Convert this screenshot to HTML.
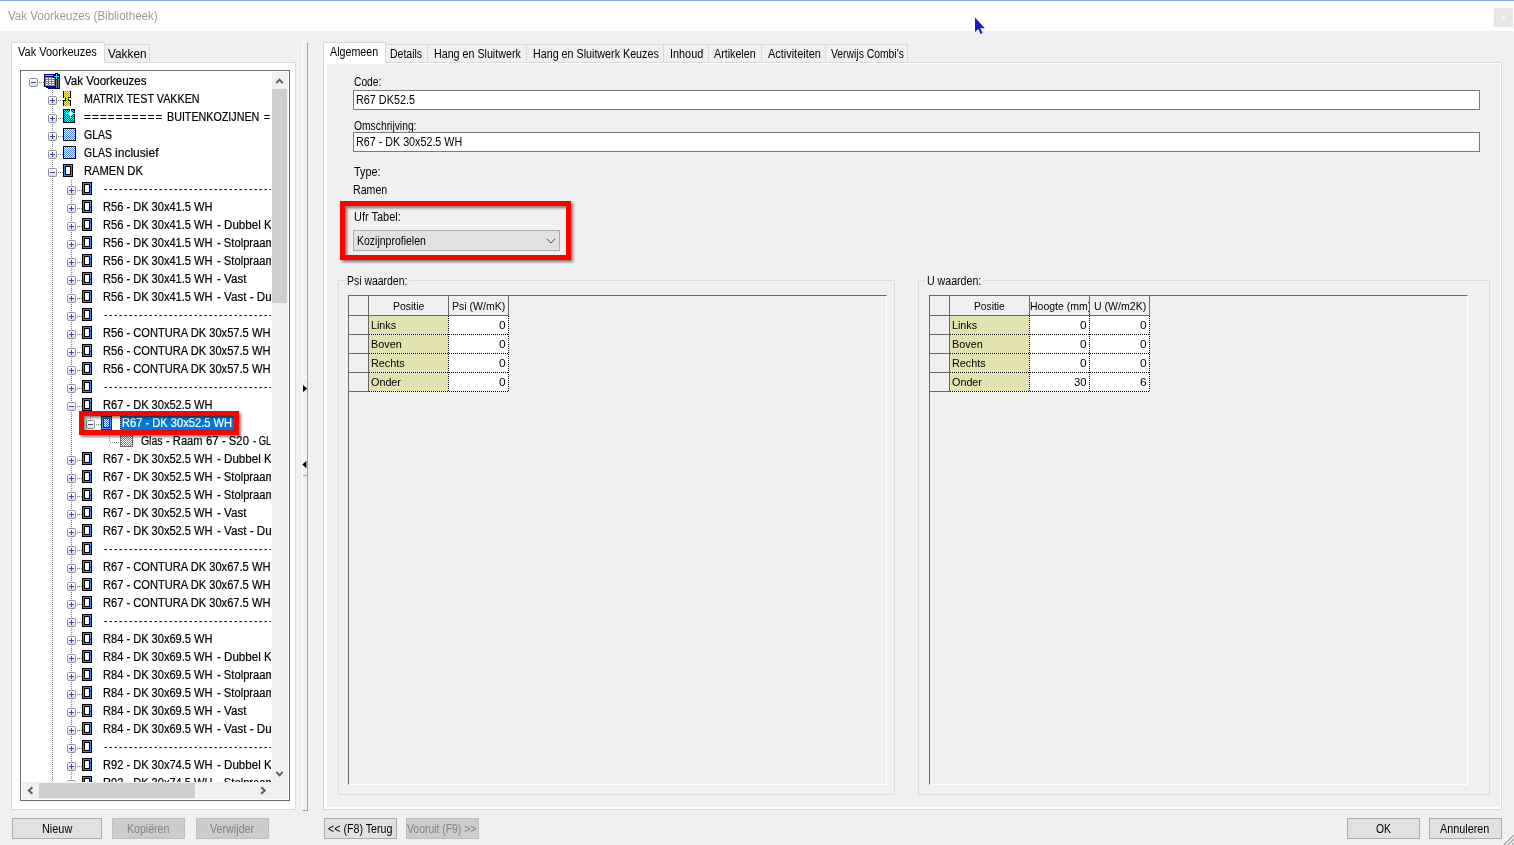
<!DOCTYPE html><html lang="nl"><head><meta charset="utf-8"><title>Vak Voorkeuzes (Bibliotheek)</title><style>
*{box-sizing:border-box;margin:0;padding:0}
html,body{width:1514px;height:845px;overflow:hidden;background:#f0f0f0}
body{position:relative;font-family:"Liberation Sans",sans-serif;font-size:11px;color:#000}
.a{position:absolute}
.t{position:absolute;white-space:pre;line-height:14px;height:14px}
.ms{font-size:11px;}
.sg{font-size:12px;transform-origin:0 50%}
.btn{position:absolute;height:21px;background:#e1e1e1;border:1px solid #adadad;text-align:center;line-height:19px;font-size:11px;white-space:pre}
.btn.dis{background:#cccccc;border-color:#bfbfbf;color:#838383}
.inp{position:absolute;background:#fff;border:1px solid #7a7a7a;height:20px}
.gb{position:absolute;border:1px solid #dcdcdc}
.gbl{position:absolute;background:#f0f0f0;white-space:pre;line-height:14px;height:14px}
.tab{position:absolute;top:44px;height:18px;border:1px solid #d9d9d9;border-bottom:none;background:#f0f0f0;line-height:14px;white-space:pre;text-align:center}
.tabsel{position:absolute;top:42px;height:21px;border:1px solid #d9d9d9;border-bottom:none;background:#fff;white-space:pre;text-align:center}
.vd{position:absolute;width:1px;background:repeating-linear-gradient(to bottom,#808080 0 1px,transparent 1px 2px)}
.hd{position:absolute;height:1px;background:repeating-linear-gradient(to right,#808080 0 1px,transparent 1px 2px)}
.ex{position:absolute;width:9px;height:9px;border:1px solid #919191;border-radius:1.5px;background:linear-gradient(#ffffff 0,#f2f2f2 50%,#d9d9d9 100%)}
.ex i{position:absolute;left:1px;top:3px;width:5px;height:1px;background:#31499f}
.ex b{position:absolute;left:3px;top:1px;width:1px;height:5px;background:#31499f}
.iw{position:absolute;width:10px;height:13px;background:#fff;box-shadow:inset 0 0 0 1px #000,inset 0 0 0 2px #3f7fff,inset 0 0 0 3px #000}
.ig{position:absolute;width:13px;height:13px;border:1px solid #000;background:repeating-conic-gradient(#4f86ff 0 25%,#ffffff 0 50%) 0 0/2px 2px}
.igd{position:absolute;width:13px;height:13px;background:repeating-conic-gradient(#4f86ff 0 25%,#ffffff 0 50%) 0 0/2px 2px;outline:1px dotted #5a5a5a;outline-offset:-1px}
.cell{position:absolute;height:18px;line-height:18px;white-space:pre;font-size:11px;overflow:hidden}
</style></head><body>
<div class="a" style="left:0;top:0;width:1514px;height:31px;background:#fff"></div>
<div class="a" style="left:0;top:0;width:1514px;height:1px;background:#82add3"></div>
<div class="t" style="left:7.80px;top:9px;font-size:12px;color:#9a9a9a;transform-origin:0 50%;transform:scaleX(0.9596);">Vak Voorkeuzes (Bibliotheek)</div>
<div class="a" style="left:1494px;top:8px;width:19px;height:19px;background:#e6e6e6"></div>
<svg class="a" style="left:1499px;top:13px" width="9" height="9" viewBox="0 0 9 9"><path d="M2.2 2.1L6.6 6.5M6.6 2.1L2.2 6.5" stroke="#f6f6f6" stroke-width="1.3" fill="none"/></svg>
<svg class="a" style="left:974px;top:16px" width="12" height="20" viewBox="0 0 12 20"><path d="M1 1.5V16L4.3 12.9L6.6 18L8.6 17.1L6.3 12.2H10.8Z" fill="#1c1cc4"/></svg>
<div class="a" style="left:11px;top:62px;width:285px;height:748px;background:#fff;border:1px solid #dcdcdc"></div>
<div class="tab" style="left:104px;width:46px"></div>
<div class="tabsel" style="left:11px;width:94px"></div>
<div class="t" style="left:18.30px;top:45px;font-size:12px;color:#000;transform-origin:0 50%;transform:scaleX(0.9184);">Vak Voorkeuzes</div>
<div class="t" style="left:107.90px;top:47px;font-size:12px;color:#000;transform-origin:0 50%;transform:scaleX(0.9847);">Vakken</div>
<div class="a" id="tree" style="left:20px;top:70px;width:270px;height:731px;background:#fff;border:1px solid #6d6d6d;overflow:hidden">
<div class="vd" style="left:31px;top:19px;height:710px"></div>
<div class="vd" style="left:50px;top:109px;height:620px"></div>
<div class="vd" style="left:69px;top:341px;height:12px"></div>
<div class="vd" style="left:88px;top:361px;height:10px"></div>
<div class="a" style="left:0;top:0;width:250px;height:711px;overflow:hidden">
<div class="hd" style="left:18px;top:11px;width:5px"></div>
<div class="ex" style="left:8px;top:7px"><i></i></div>
<svg class="a" style="left:23px;top:2px" width="16" height="17" viewBox="0 0 16 17" shape-rendering="crispEdges"><path d="M0 1H16V16H4V15H2V14H0Z" fill="#000080"/><rect x="1" y="2" width="8" height="1" fill="#00ffff"/><rect x="1" y="4" width="10" height="9" fill="#808080"/><g fill="#fff"><rect x="2" y="5" width="2" height="1"/><rect x="5" y="5" width="2" height="1"/><rect x="8" y="5" width="2" height="1"/><rect x="2" y="7" width="2" height="1"/><rect x="5" y="7" width="2" height="1"/><rect x="8" y="7" width="2" height="1"/><rect x="2" y="9" width="2" height="1"/><rect x="5" y="9" width="2" height="1"/><rect x="8" y="9" width="2" height="1"/><rect x="2" y="11" width="2" height="1"/><rect x="5" y="11" width="2" height="1"/><rect x="8" y="11" width="2" height="1"/></g><rect x="12" y="6" width="1" height="9" fill="#808080"/><rect x="14" y="6" width="1" height="9" fill="#808080"/><path d="M11 0H14V2H16V5H14V7H11V5H9V2H11Z" fill="#000"/><path d="M12 1H13V3H15V4H13V6H12V4H10V3H12Z" fill="#00ffff"/></svg>
<div class="t" style="left:43.40px;top:3px;font-size:12px;color:#000;transform-origin:0 50%;transform:scaleX(0.9615);-webkit-text-stroke:0.2px;">Vak Voorkeuzes</div>
<div class="hd" style="left:37px;top:29px;width:5px"></div>
<div class="ex" style="left:27px;top:25px"><i></i><b></b></div>
<svg class="a" style="left:42px;top:20px" width="16" height="16" viewBox="0 0 16 16" shape-rendering="crispEdges"><defs><pattern id="py" width="2" height="2" patternUnits="userSpaceOnUse"><rect width="2" height="2" fill="#ffff00"/><rect width="1" height="1" fill="#b4b400"/><rect x="1" y="1" width="1" height="1" fill="#b4b400"/></pattern></defs><path d="M0 0H8V7H6V9H8V15H0V9H2V7H0Z" fill="#000"/><path d="M1 0H7V6H5V7H6V8H5V10H7V15H1V10H3V7H1Z" fill="url(#py)"/></svg>
<div class="t" style="left:63.00px;top:21px;font-size:12px;color:#000;transform-origin:0 50%;transform:scaleX(0.8947);-webkit-text-stroke:0.2px;">MATRIX TEST VAKKEN</div>
<div class="hd" style="left:37px;top:47px;width:5px"></div>
<div class="ex" style="left:27px;top:43px"><i></i><b></b></div>
<svg class="a" style="left:42px;top:38px" width="16" height="16" viewBox="0 0 16 16" shape-rendering="crispEdges"><defs><pattern id="pb" width="2" height="2" patternUnits="userSpaceOnUse"><rect width="2" height="2" fill="#0000ff"/><rect width="1" height="1" fill="#00ffff"/><rect x="1" y="1" width="1" height="1" fill="#00ffff"/></pattern></defs><rect x="0" y="0" width="12" height="14" fill="#000"/><rect x="1" y="1" width="10" height="12" fill="url(#pb)"/><path d="M7 0H8V3H9V4H12V5H9V6H8V9H7V6H6V5H3V4H6V3H7Z" fill="#fff"/><rect x="7" y="4" width="1" height="1" fill="#ffff00"/></svg>
<div class="t" style="left:63.00px;top:39px;font-size:12px;color:#000;transform-origin:0 50%;transform:scaleX(0.9691);-webkit-text-stroke:0.2px;letter-spacing:1.2px;">==========</div>
<div class="t" style="left:145.80px;top:39px;font-size:12px;color:#000;transform-origin:0 50%;transform:scaleX(0.8935);-webkit-text-stroke:0.2px;">BUITENKOZIJNEN</div>
<div class="t" style="left:242.50px;top:39px;font-size:12px;color:#000;transform-origin:0 50%;transform:scaleX(0.8571);-webkit-text-stroke:0.2px;">=</div>
<div class="hd" style="left:37px;top:65px;width:5px"></div>
<div class="ex" style="left:27px;top:61px"><i></i><b></b></div>
<div class="ig" style="left:42px;top:57px"></div>
<div class="t" style="left:63.00px;top:57px;font-size:12px;color:#000;transform-origin:0 50%;transform:scaleX(0.8719);-webkit-text-stroke:0.2px;">GLAS</div>
<div class="hd" style="left:37px;top:83px;width:5px"></div>
<div class="ex" style="left:27px;top:79px"><i></i><b></b></div>
<div class="ig" style="left:42px;top:75px"></div>
<div class="t" style="left:63.00px;top:75px;font-size:12px;color:#000;transform-origin:0 50%;transform:scaleX(0.8719);-webkit-text-stroke:0.2px;">GLAS</div>
<div class="t" style="left:94.20px;top:75px;font-size:12px;color:#000;transform-origin:0 50%;transform:scaleX(1.0046);-webkit-text-stroke:0.2px;">inclusief</div>
<div class="hd" style="left:37px;top:101px;width:5px"></div>
<div class="ex" style="left:27px;top:97px"><i></i></div>
<div class="iw" style="left:42px;top:93px"></div>
<div class="t" style="left:63.00px;top:93px;font-size:12px;color:#000;transform-origin:0 50%;transform:scaleX(0.9289);-webkit-text-stroke:0.2px;">RAMEN DK</div>
<div class="hd" style="left:56px;top:119px;width:5px"></div>
<div class="ex" style="left:46px;top:115px"><i></i><b></b></div>
<div class="iw" style="left:61px;top:111px"></div>
<div class="t" style="left:83px;top:111px;font-size:12px;letter-spacing:1.8824px;transform-origin:0 50%;transform:scaleX(0.85)">----------------------------------------</div>
<div class="hd" style="left:56px;top:137px;width:5px"></div>
<div class="ex" style="left:46px;top:133px"><i></i><b></b></div>
<div class="iw" style="left:61px;top:129px"></div>
<div class="t" style="left:81.90px;top:129px;font-size:12px;color:#000;transform-origin:0 50%;transform:scaleX(0.9225);-webkit-text-stroke:0.2px;">R56 - DK 30x41.5 WH</div>
<div class="hd" style="left:56px;top:155px;width:5px"></div>
<div class="ex" style="left:46px;top:151px"><i></i><b></b></div>
<div class="iw" style="left:61px;top:147px"></div>
<div class="t" style="left:81.90px;top:147px;font-size:12px;color:#000;transform-origin:0 50%;transform:scaleX(0.9225);-webkit-text-stroke:0.2px;">R56 - DK 30x41.5 WH</div>
<div class="t" style="left:195.60px;top:147px;font-size:12px;color:#000;transform-origin:0 50%;transform:scaleX(0.9647);-webkit-text-stroke:0.2px;">- Dubbel K</div>
<div class="hd" style="left:56px;top:173px;width:5px"></div>
<div class="ex" style="left:46px;top:169px"><i></i><b></b></div>
<div class="iw" style="left:61px;top:165px"></div>
<div class="t" style="left:81.90px;top:165px;font-size:12px;color:#000;transform-origin:0 50%;transform:scaleX(0.9225);-webkit-text-stroke:0.2px;">R56 - DK 30x41.5 WH</div>
<div class="t" style="left:195.60px;top:165px;font-size:12px;color:#000;transform-origin:0 50%;transform:scaleX(0.9328);-webkit-text-stroke:0.2px;">- Stolpraam</div>
<div class="hd" style="left:56px;top:191px;width:5px"></div>
<div class="ex" style="left:46px;top:187px"><i></i><b></b></div>
<div class="iw" style="left:61px;top:183px"></div>
<div class="t" style="left:81.90px;top:183px;font-size:12px;color:#000;transform-origin:0 50%;transform:scaleX(0.9225);-webkit-text-stroke:0.2px;">R56 - DK 30x41.5 WH</div>
<div class="t" style="left:195.60px;top:183px;font-size:12px;color:#000;transform-origin:0 50%;transform:scaleX(0.9328);-webkit-text-stroke:0.2px;">- Stolpraam</div>
<div class="hd" style="left:56px;top:209px;width:5px"></div>
<div class="ex" style="left:46px;top:205px"><i></i><b></b></div>
<div class="iw" style="left:61px;top:201px"></div>
<div class="t" style="left:81.90px;top:201px;font-size:12px;color:#000;transform-origin:0 50%;transform:scaleX(0.9225);-webkit-text-stroke:0.2px;">R56 - DK 30x41.5 WH</div>
<div class="t" style="left:195.60px;top:201px;font-size:12px;color:#000;transform-origin:0 50%;transform:scaleX(0.9672);-webkit-text-stroke:0.2px;">- Vast</div>
<div class="hd" style="left:56px;top:227px;width:5px"></div>
<div class="ex" style="left:46px;top:223px"><i></i><b></b></div>
<div class="iw" style="left:61px;top:219px"></div>
<div class="t" style="left:81.90px;top:219px;font-size:12px;color:#000;transform-origin:0 50%;transform:scaleX(0.9225);-webkit-text-stroke:0.2px;">R56 - DK 30x41.5 WH</div>
<div class="t" style="left:195.60px;top:219px;font-size:12px;color:#000;transform-origin:0 50%;transform:scaleX(0.9681);-webkit-text-stroke:0.2px;">- Vast - Du</div>
<div class="hd" style="left:56px;top:245px;width:5px"></div>
<div class="ex" style="left:46px;top:241px"><i></i><b></b></div>
<div class="iw" style="left:61px;top:237px"></div>
<div class="t" style="left:83px;top:237px;font-size:12px;letter-spacing:1.8824px;transform-origin:0 50%;transform:scaleX(0.85)">----------------------------------------</div>
<div class="hd" style="left:56px;top:263px;width:5px"></div>
<div class="ex" style="left:46px;top:259px"><i></i><b></b></div>
<div class="iw" style="left:61px;top:255px"></div>
<div class="t" style="left:81.90px;top:255px;font-size:12px;color:#000;transform-origin:0 50%;transform:scaleX(0.9264);-webkit-text-stroke:0.2px;">R56 - CONTURA DK 30x57.5 WH</div>
<div class="hd" style="left:56px;top:281px;width:5px"></div>
<div class="ex" style="left:46px;top:277px"><i></i><b></b></div>
<div class="iw" style="left:61px;top:273px"></div>
<div class="t" style="left:81.90px;top:273px;font-size:12px;color:#000;transform-origin:0 50%;transform:scaleX(0.9264);-webkit-text-stroke:0.2px;">R56 - CONTURA DK 30x57.5 WH</div>
<div class="hd" style="left:56px;top:299px;width:5px"></div>
<div class="ex" style="left:46px;top:295px"><i></i><b></b></div>
<div class="iw" style="left:61px;top:291px"></div>
<div class="t" style="left:81.90px;top:291px;font-size:12px;color:#000;transform-origin:0 50%;transform:scaleX(0.9264);-webkit-text-stroke:0.2px;">R56 - CONTURA DK 30x57.5 WH</div>
<div class="hd" style="left:56px;top:317px;width:5px"></div>
<div class="ex" style="left:46px;top:313px"><i></i><b></b></div>
<div class="iw" style="left:61px;top:309px"></div>
<div class="t" style="left:83px;top:309px;font-size:12px;letter-spacing:1.8824px;transform-origin:0 50%;transform:scaleX(0.85)">----------------------------------------</div>
<div class="hd" style="left:56px;top:335px;width:5px"></div>
<div class="ex" style="left:46px;top:331px"><i></i></div>
<div class="iw" style="left:61px;top:327px"></div>
<div class="t" style="left:81.90px;top:327px;font-size:12px;color:#000;transform-origin:0 50%;transform:scaleX(0.9225);-webkit-text-stroke:0.2px;">R67 - DK 30x52.5 WH</div>
<div class="hd" style="left:75px;top:353px;width:5px"></div>
<div class="ex" style="left:65px;top:349px"><i></i></div>
<div class="a" style="left:80px;top:345px;width:11px;height:15px;background:#0b2f72"></div><div class="a" style="left:81px;top:346px;width:9px;height:12px;background:#5a8ff0"></div><div class="a" style="left:82px;top:347px;width:7px;height:10px;background:#14306c"></div><div class="a" style="left:83px;top:348px;width:5px;height:8px;background:repeating-conic-gradient(#3f7fff 0 25%,#ffffff 0 50%) 0 0/2px 2px"></div>
<div class="a" style="left:99px;top:344px;width:115px;height:18px;background:#0078d7"></div>
<div class="a" style="left:99px;top:344px;width:1px;height:18px;background:repeating-linear-gradient(to bottom,#ff8728 0 1px,#10203a 1px 2px)"></div>
<div class="a" style="left:213px;top:344px;width:1px;height:18px;background:repeating-linear-gradient(to bottom,#10203a 0 1px,#ff8728 1px 2px)"></div>
<div class="t" style="left:100.90px;top:345px;font-size:12px;color:#fff;transform-origin:0 50%;transform:scaleX(0.9275);-webkit-text-stroke:0.2px;">R67 - DK 30x52.5 WH</div>
<div class="hd" style="left:89px;top:371px;width:10px"></div>
<div class="igd" style="left:99px;top:363px"></div>
<div class="t" style="left:119.90px;top:363px;font-size:12px;color:#000;transform-origin:0 50%;transform:scaleX(0.8704);-webkit-text-stroke:0.2px;">Glas</div>
<div class="t" style="left:144.60px;top:363px;font-size:12px;color:#000;transform-origin:0 50%;transform:scaleX(0.9313);-webkit-text-stroke:0.2px;">- Raam</div>
<div class="t" style="left:185.30px;top:363px;font-size:12px;color:#000;transform-origin:0 50%;transform:scaleX(0.9474);-webkit-text-stroke:0.2px;">67</div>
<div class="t" style="left:201.30px;top:363px;font-size:12px;color:#000;transform-origin:0 50%;transform:scaleX(0.9373);-webkit-text-stroke:0.2px;">- S20</div>
<div class="t" style="left:232.10px;top:363px;font-size:12px;color:#000;transform-origin:0 50%;transform:scaleX(0.7768);-webkit-text-stroke:0.2px;">- GL</div>
<div class="hd" style="left:56px;top:389px;width:5px"></div>
<div class="ex" style="left:46px;top:385px"><i></i><b></b></div>
<div class="iw" style="left:61px;top:381px"></div>
<div class="t" style="left:81.90px;top:381px;font-size:12px;color:#000;transform-origin:0 50%;transform:scaleX(0.9225);-webkit-text-stroke:0.2px;">R67 - DK 30x52.5 WH</div>
<div class="t" style="left:195.60px;top:381px;font-size:12px;color:#000;transform-origin:0 50%;transform:scaleX(0.9647);-webkit-text-stroke:0.2px;">- Dubbel K</div>
<div class="hd" style="left:56px;top:407px;width:5px"></div>
<div class="ex" style="left:46px;top:403px"><i></i><b></b></div>
<div class="iw" style="left:61px;top:399px"></div>
<div class="t" style="left:81.90px;top:399px;font-size:12px;color:#000;transform-origin:0 50%;transform:scaleX(0.9225);-webkit-text-stroke:0.2px;">R67 - DK 30x52.5 WH</div>
<div class="t" style="left:195.60px;top:399px;font-size:12px;color:#000;transform-origin:0 50%;transform:scaleX(0.9328);-webkit-text-stroke:0.2px;">- Stolpraam</div>
<div class="hd" style="left:56px;top:425px;width:5px"></div>
<div class="ex" style="left:46px;top:421px"><i></i><b></b></div>
<div class="iw" style="left:61px;top:417px"></div>
<div class="t" style="left:81.90px;top:417px;font-size:12px;color:#000;transform-origin:0 50%;transform:scaleX(0.9225);-webkit-text-stroke:0.2px;">R67 - DK 30x52.5 WH</div>
<div class="t" style="left:195.60px;top:417px;font-size:12px;color:#000;transform-origin:0 50%;transform:scaleX(0.9328);-webkit-text-stroke:0.2px;">- Stolpraam</div>
<div class="hd" style="left:56px;top:443px;width:5px"></div>
<div class="ex" style="left:46px;top:439px"><i></i><b></b></div>
<div class="iw" style="left:61px;top:435px"></div>
<div class="t" style="left:81.90px;top:435px;font-size:12px;color:#000;transform-origin:0 50%;transform:scaleX(0.9225);-webkit-text-stroke:0.2px;">R67 - DK 30x52.5 WH</div>
<div class="t" style="left:195.60px;top:435px;font-size:12px;color:#000;transform-origin:0 50%;transform:scaleX(0.9672);-webkit-text-stroke:0.2px;">- Vast</div>
<div class="hd" style="left:56px;top:461px;width:5px"></div>
<div class="ex" style="left:46px;top:457px"><i></i><b></b></div>
<div class="iw" style="left:61px;top:453px"></div>
<div class="t" style="left:81.90px;top:453px;font-size:12px;color:#000;transform-origin:0 50%;transform:scaleX(0.9225);-webkit-text-stroke:0.2px;">R67 - DK 30x52.5 WH</div>
<div class="t" style="left:195.60px;top:453px;font-size:12px;color:#000;transform-origin:0 50%;transform:scaleX(0.9681);-webkit-text-stroke:0.2px;">- Vast - Du</div>
<div class="hd" style="left:56px;top:479px;width:5px"></div>
<div class="ex" style="left:46px;top:475px"><i></i><b></b></div>
<div class="iw" style="left:61px;top:471px"></div>
<div class="t" style="left:83px;top:471px;font-size:12px;letter-spacing:1.8824px;transform-origin:0 50%;transform:scaleX(0.85)">----------------------------------------</div>
<div class="hd" style="left:56px;top:497px;width:5px"></div>
<div class="ex" style="left:46px;top:493px"><i></i><b></b></div>
<div class="iw" style="left:61px;top:489px"></div>
<div class="t" style="left:81.90px;top:489px;font-size:12px;color:#000;transform-origin:0 50%;transform:scaleX(0.9264);-webkit-text-stroke:0.2px;">R67 - CONTURA DK 30x67.5 WH</div>
<div class="hd" style="left:56px;top:515px;width:5px"></div>
<div class="ex" style="left:46px;top:511px"><i></i><b></b></div>
<div class="iw" style="left:61px;top:507px"></div>
<div class="t" style="left:81.90px;top:507px;font-size:12px;color:#000;transform-origin:0 50%;transform:scaleX(0.9264);-webkit-text-stroke:0.2px;">R67 - CONTURA DK 30x67.5 WH</div>
<div class="hd" style="left:56px;top:533px;width:5px"></div>
<div class="ex" style="left:46px;top:529px"><i></i><b></b></div>
<div class="iw" style="left:61px;top:525px"></div>
<div class="t" style="left:81.90px;top:525px;font-size:12px;color:#000;transform-origin:0 50%;transform:scaleX(0.9264);-webkit-text-stroke:0.2px;">R67 - CONTURA DK 30x67.5 WH</div>
<div class="hd" style="left:56px;top:551px;width:5px"></div>
<div class="ex" style="left:46px;top:547px"><i></i><b></b></div>
<div class="iw" style="left:61px;top:543px"></div>
<div class="t" style="left:83px;top:543px;font-size:12px;letter-spacing:1.8824px;transform-origin:0 50%;transform:scaleX(0.85)">----------------------------------------</div>
<div class="hd" style="left:56px;top:569px;width:5px"></div>
<div class="ex" style="left:46px;top:565px"><i></i><b></b></div>
<div class="iw" style="left:61px;top:561px"></div>
<div class="t" style="left:81.90px;top:561px;font-size:12px;color:#000;transform-origin:0 50%;transform:scaleX(0.9225);-webkit-text-stroke:0.2px;">R84 - DK 30x69.5 WH</div>
<div class="hd" style="left:56px;top:587px;width:5px"></div>
<div class="ex" style="left:46px;top:583px"><i></i><b></b></div>
<div class="iw" style="left:61px;top:579px"></div>
<div class="t" style="left:81.90px;top:579px;font-size:12px;color:#000;transform-origin:0 50%;transform:scaleX(0.9225);-webkit-text-stroke:0.2px;">R84 - DK 30x69.5 WH</div>
<div class="t" style="left:195.60px;top:579px;font-size:12px;color:#000;transform-origin:0 50%;transform:scaleX(0.9647);-webkit-text-stroke:0.2px;">- Dubbel K</div>
<div class="hd" style="left:56px;top:605px;width:5px"></div>
<div class="ex" style="left:46px;top:601px"><i></i><b></b></div>
<div class="iw" style="left:61px;top:597px"></div>
<div class="t" style="left:81.90px;top:597px;font-size:12px;color:#000;transform-origin:0 50%;transform:scaleX(0.9225);-webkit-text-stroke:0.2px;">R84 - DK 30x69.5 WH</div>
<div class="t" style="left:195.60px;top:597px;font-size:12px;color:#000;transform-origin:0 50%;transform:scaleX(0.9328);-webkit-text-stroke:0.2px;">- Stolpraam</div>
<div class="hd" style="left:56px;top:623px;width:5px"></div>
<div class="ex" style="left:46px;top:619px"><i></i><b></b></div>
<div class="iw" style="left:61px;top:615px"></div>
<div class="t" style="left:81.90px;top:615px;font-size:12px;color:#000;transform-origin:0 50%;transform:scaleX(0.9225);-webkit-text-stroke:0.2px;">R84 - DK 30x69.5 WH</div>
<div class="t" style="left:195.60px;top:615px;font-size:12px;color:#000;transform-origin:0 50%;transform:scaleX(0.9328);-webkit-text-stroke:0.2px;">- Stolpraam</div>
<div class="hd" style="left:56px;top:641px;width:5px"></div>
<div class="ex" style="left:46px;top:637px"><i></i><b></b></div>
<div class="iw" style="left:61px;top:633px"></div>
<div class="t" style="left:81.90px;top:633px;font-size:12px;color:#000;transform-origin:0 50%;transform:scaleX(0.9225);-webkit-text-stroke:0.2px;">R84 - DK 30x69.5 WH</div>
<div class="t" style="left:195.60px;top:633px;font-size:12px;color:#000;transform-origin:0 50%;transform:scaleX(0.9672);-webkit-text-stroke:0.2px;">- Vast</div>
<div class="hd" style="left:56px;top:659px;width:5px"></div>
<div class="ex" style="left:46px;top:655px"><i></i><b></b></div>
<div class="iw" style="left:61px;top:651px"></div>
<div class="t" style="left:81.90px;top:651px;font-size:12px;color:#000;transform-origin:0 50%;transform:scaleX(0.9225);-webkit-text-stroke:0.2px;">R84 - DK 30x69.5 WH</div>
<div class="t" style="left:195.60px;top:651px;font-size:12px;color:#000;transform-origin:0 50%;transform:scaleX(0.9681);-webkit-text-stroke:0.2px;">- Vast - Du</div>
<div class="hd" style="left:56px;top:677px;width:5px"></div>
<div class="ex" style="left:46px;top:673px"><i></i><b></b></div>
<div class="iw" style="left:61px;top:669px"></div>
<div class="t" style="left:83px;top:669px;font-size:12px;letter-spacing:1.8824px;transform-origin:0 50%;transform:scaleX(0.85)">----------------------------------------</div>
<div class="hd" style="left:56px;top:695px;width:5px"></div>
<div class="ex" style="left:46px;top:691px"><i></i><b></b></div>
<div class="iw" style="left:61px;top:687px"></div>
<div class="t" style="left:81.90px;top:687px;font-size:12px;color:#000;transform-origin:0 50%;transform:scaleX(0.9225);-webkit-text-stroke:0.2px;">R92 - DK 30x74.5 WH</div>
<div class="t" style="left:195.60px;top:687px;font-size:12px;color:#000;transform-origin:0 50%;transform:scaleX(0.9647);-webkit-text-stroke:0.2px;">- Dubbel K</div>
<div class="hd" style="left:56px;top:713px;width:5px"></div>
<div class="ex" style="left:46px;top:709px"><i></i><b></b></div>
<div class="iw" style="left:61px;top:705px"></div>
<div class="t" style="left:81.90px;top:705px;font-size:12px;color:#000;transform-origin:0 50%;transform:scaleX(0.9225);-webkit-text-stroke:0.2px;">R92 - DK 30x74.5 WH</div>
<div class="t" style="left:195.60px;top:705px;font-size:12px;color:#000;transform-origin:0 50%;transform:scaleX(0.9328);-webkit-text-stroke:0.2px;">- Stolpraam</div>
</div>
<div class="a" style="left:251px;top:1px;width:16px;height:727px;background:#f0f0f0"></div>
<div class="a" style="left:251px;top:18px;width:15px;height:214px;background:#cdcdcd"></div>
<div class="a" style="left:1px;top:711px;width:266px;height:17px;background:#f0f0f0"></div>
<div class="a" style="left:18px;top:712px;width:156px;height:15px;background:#cdcdcd"></div>
<svg class="a" style="left:0;top:0" width="268" height="729" viewBox="21 71 268 729"><g stroke="#5d5d5d" stroke-width="1.9" fill="none"><path d="M276.3 83.2L279.5 79.6L282.7 83.2"/><path d="M276.3 771.8L279.5 775.4L282.7 771.8"/><path d="M261.2 787.3L264.8 790.5L261.2 793.7"/><path d="M32.4 787.3L28.8 790.5L32.4 793.7"/></g></svg>
</div>
<div class="a" style="left:79px;top:411px;width:160px;height:24px;border:5px solid #ff0000;filter:drop-shadow(2px 2px 1.5px rgba(0,0,0,.5))"></div>
<div class="a" style="left:302px;top:42px;width:6px;height:769px;border-left:1px solid #fff;border-top:1px solid #fff;border-right:1px solid #a0a0a0;border-bottom:1px solid #a0a0a0"></div>
<svg class="a" style="left:303px;top:385px" width="5" height="8" viewBox="0 0 5 8"><path d="M0 0L4 3.6L0 7.2Z" fill="#000"/></svg>
<svg class="a" style="left:302px;top:461px" width="5" height="8" viewBox="0 0 5 8"><path d="M4.4 0L0.2 3.6L4.4 7.2Z" fill="#000"/></svg>
<div class="a" style="left:303px;top:376px;width:4px;height:1px;background:#fff"></div>
<div class="a" style="left:303px;top:475px;width:4px;height:1px;background:#a0a0a0"></div>
<div class="a" style="left:323px;top:62px;width:1179px;height:748px;background:#fff;border:1px solid #d9d9d9"></div>
<div class="a" style="left:327px;top:64px;width:1173px;height:743px;background:#f0f0f0"></div>
<div class="tab" style="left:385px;width:43px"></div>
<div class="t" style="left:390.10px;top:47px;font-size:12px;color:#000;transform-origin:0 50%;transform:scaleX(0.8747);">Details</div>
<div class="tab" style="left:427px;width:100px"></div>
<div class="t" style="left:433.80px;top:47px;font-size:12px;color:#000;transform-origin:0 50%;transform:scaleX(0.8913);">Hang en Sluitwerk</div>
<div class="tab" style="left:526px;width:138px"></div>
<div class="t" style="left:532.50px;top:47px;font-size:12px;color:#000;transform-origin:0 50%;transform:scaleX(0.8934);">Hang en Sluitwerk Keuzes</div>
<div class="tab" style="left:663px;width:46px"></div>
<div class="t" style="left:669.90px;top:47px;font-size:12px;color:#000;transform-origin:0 50%;transform:scaleX(0.9046);">Inhoud</div>
<div class="tab" style="left:708px;width:54px"></div>
<div class="t" style="left:714.30px;top:47px;font-size:12px;color:#000;transform-origin:0 50%;transform:scaleX(0.8908);">Artikelen</div>
<div class="tab" style="left:761px;width:65px"></div>
<div class="t" style="left:767.60px;top:47px;font-size:12px;color:#000;transform-origin:0 50%;transform:scaleX(0.9103);">Activiteiten</div>
<div class="tab" style="left:825px;width:83px"></div>
<div class="t" style="left:831.10px;top:47px;font-size:12px;color:#000;transform-origin:0 50%;transform:scaleX(0.8636);">Verwijs Combi&#x27;s</div>
<div class="tabsel" style="left:323px;width:63px"></div>
<div class="t" style="left:330.20px;top:45px;font-size:12px;color:#000;transform-origin:0 50%;transform:scaleX(0.8907);">Algemeen</div>
<div class="t" style="left:354.00px;top:75px;font-size:12px;color:#000;transform-origin:0 50%;transform:scaleX(0.8531);">Code:</div>
<div class="inp" style="left:353px;top:90px;width:1127px"></div>
<div class="t" style="left:356.10px;top:93px;font-size:12px;color:#000;transform-origin:0 50%;transform:scaleX(0.9021);">R67 DK52.5</div>
<div class="t" style="left:354.00px;top:119px;font-size:12px;color:#000;transform-origin:0 50%;transform:scaleX(0.8597);">Omschrijving:</div>
<div class="inp" style="left:353px;top:132px;width:1127px"></div>
<div class="t" style="left:356.10px;top:135px;font-size:12px;color:#000;transform-origin:0 50%;transform:scaleX(0.8947);">R67 - DK 30x52.5 WH</div>
<div class="t" style="left:354.20px;top:165px;font-size:12px;color:#000;transform-origin:0 50%;transform:scaleX(0.9010);">Type:</div>
<div class="t" style="left:353.10px;top:183px;font-size:12px;color:#000;transform-origin:0 50%;transform:scaleX(0.8863);">Ramen</div>
<div class="t" style="left:353.80px;top:210px;font-size:12px;color:#000;transform-origin:0 50%;transform:scaleX(0.9159);">Ufr Tabel:</div>
<div class="a" style="left:353px;top:230px;width:207px;height:21px;background:#e1e1e1;border:1px solid #adadad"></div>
<div class="t" style="left:356.70px;top:234px;font-size:12px;color:#000;transform-origin:0 50%;transform:scaleX(0.8742);">Kozijnprofielen</div>
<svg class="a" style="left:546px;top:238px" width="10" height="6" viewBox="0 0 10 6"><path d="M0.8 0.8L5 5L9.2 0.8" stroke="#444" stroke-width="1" fill="none"/></svg>
<div class="a" style="left:340px;top:201px;width:231px;height:59px;border:5px solid #ff0000;filter:drop-shadow(2px 2px 1.5px rgba(0,0,0,.5))"></div>
<div class="gb" style="left:338px;top:280px;width:557px;height:515px"></div>
<div class="a" style="left:345px;top:280px;width:64px;height:1px;background:#f0f0f0"></div>
<div class="t" style="left:346.90px;top:274px;font-size:12px;color:#000;transform-origin:0 50%;transform:scaleX(0.8703);">Psi waarden:</div>
<div class="gb" style="left:918px;top:280px;width:572px;height:515px"></div>
<div class="a" style="left:925px;top:280px;width:58px;height:1px;background:#f0f0f0"></div>
<div class="t" style="left:927.00px;top:274px;font-size:12px;color:#000;transform-origin:0 50%;transform:scaleX(0.8844);">U waarden:</div>
<div class="a" style="left:348px;top:295px;width:539px;height:490px;border-left:1px solid #696969;border-top:1px solid #696969;border-right:1px solid #fff;border-bottom:1px solid #fff"></div>
<div class="a" style="left:369px;top:316px;width:79px;height:18px;background:#e2e1b0"></div>
<div class="a" style="left:449px;top:316px;width:59px;height:18px;background:#fff"></div>
<div class="a" style="left:369px;top:335px;width:79px;height:18px;background:#e2e1b0"></div>
<div class="a" style="left:449px;top:335px;width:59px;height:18px;background:#fff"></div>
<div class="a" style="left:369px;top:354px;width:79px;height:18px;background:#e2e1b0"></div>
<div class="a" style="left:449px;top:354px;width:59px;height:18px;background:#fff"></div>
<div class="a" style="left:369px;top:373px;width:79px;height:18px;background:#e2e1b0"></div>
<div class="a" style="left:449px;top:373px;width:59px;height:18px;background:#fff"></div>
<div class="a" style="left:368px;top:296px;width:1px;height:20px;background:#696969"></div>
<div class="a" style="left:448px;top:296px;width:1px;height:20px;background:#696969"></div>
<div class="a" style="left:508px;top:296px;width:1px;height:20px;background:#696969"></div>
<div class="a" style="left:349px;top:315px;width:160px;height:1px;background:#696969"></div>
<div class="a" style="left:368px;top:315px;width:1px;height:77px;background:#696969"></div>
<div class="a" style="left:349px;top:334px;width:20px;height:1px;background:#696969"></div>
<div class="a" style="left:369px;top:334px;width:140px;height:1px;background:repeating-linear-gradient(to right,#000 0 1px,#fff 1px 2px)"></div>
<div class="a" style="left:349px;top:353px;width:20px;height:1px;background:#696969"></div>
<div class="a" style="left:369px;top:353px;width:140px;height:1px;background:repeating-linear-gradient(to right,#000 0 1px,#fff 1px 2px)"></div>
<div class="a" style="left:349px;top:372px;width:20px;height:1px;background:#696969"></div>
<div class="a" style="left:369px;top:372px;width:140px;height:1px;background:repeating-linear-gradient(to right,#000 0 1px,#fff 1px 2px)"></div>
<div class="a" style="left:349px;top:391px;width:20px;height:1px;background:#696969"></div>
<div class="a" style="left:369px;top:391px;width:140px;height:1px;background:repeating-linear-gradient(to right,#000 0 1px,#fff 1px 2px)"></div>
<div class="a" style="left:448px;top:316px;width:1px;height:76px;background:repeating-linear-gradient(to bottom,#000 0 1px,#fff 1px 2px)"></div>
<div class="a" style="left:508px;top:316px;width:1px;height:76px;background:repeating-linear-gradient(to bottom,#000 0 1px,#fff 1px 2px)"></div>
<div class="a" style="left:369px;top:296px;width:79px;height:19px;overflow:hidden"><div class="t" style="left:23.50px;top:3px;font-size:11px;color:#000;transform-origin:0 50%;transform:scaleX(0.9515);">Positie</div></div>
<div class="a" style="left:449px;top:296px;width:59px;height:19px;overflow:hidden"><div class="t" style="left:2.70px;top:3px;font-size:11px;color:#000;transform-origin:0 50%;transform:scaleX(0.9579);">Psi (W/mK)</div></div>
<div class="t" style="left:370.80px;top:318px;font-size:11px;color:#000;transform-origin:0 50%;transform:scaleX(0.9740);">Links</div>
<div class="t" style="left:498.84px;top:318px;font-size:11px;color:#000;transform-origin:0 50%;transform:scaleX(1.0840);">0</div>
<div class="t" style="left:370.80px;top:337px;font-size:11px;color:#000;transform-origin:0 50%;transform:scaleX(0.9850);">Boven</div>
<div class="t" style="left:498.84px;top:337px;font-size:11px;color:#000;transform-origin:0 50%;transform:scaleX(1.0840);">0</div>
<div class="t" style="left:370.80px;top:356px;font-size:11px;color:#000;transform-origin:0 50%;transform:scaleX(0.9856);">Rechts</div>
<div class="t" style="left:498.84px;top:356px;font-size:11px;color:#000;transform-origin:0 50%;transform:scaleX(1.0840);">0</div>
<div class="t" style="left:370.80px;top:375px;font-size:11px;color:#000;transform-origin:0 50%;transform:scaleX(0.9799);">Onder</div>
<div class="t" style="left:498.84px;top:375px;font-size:11px;color:#000;transform-origin:0 50%;transform:scaleX(1.0840);">0</div>
<div class="a" style="left:929px;top:295px;width:539px;height:490px;border-left:1px solid #696969;border-top:1px solid #696969;border-right:1px solid #fff;border-bottom:1px solid #fff"></div>
<div class="a" style="left:950px;top:316px;width:79px;height:18px;background:#e2e1b0"></div>
<div class="a" style="left:1030px;top:316px;width:119px;height:18px;background:#fff"></div>
<div class="a" style="left:950px;top:335px;width:79px;height:18px;background:#e2e1b0"></div>
<div class="a" style="left:1030px;top:335px;width:119px;height:18px;background:#fff"></div>
<div class="a" style="left:950px;top:354px;width:79px;height:18px;background:#e2e1b0"></div>
<div class="a" style="left:1030px;top:354px;width:119px;height:18px;background:#fff"></div>
<div class="a" style="left:950px;top:373px;width:79px;height:18px;background:#e2e1b0"></div>
<div class="a" style="left:1030px;top:373px;width:119px;height:18px;background:#fff"></div>
<div class="a" style="left:949px;top:296px;width:1px;height:20px;background:#696969"></div>
<div class="a" style="left:1029px;top:296px;width:1px;height:20px;background:#696969"></div>
<div class="a" style="left:1089px;top:296px;width:1px;height:20px;background:#696969"></div>
<div class="a" style="left:1149px;top:296px;width:1px;height:20px;background:#696969"></div>
<div class="a" style="left:930px;top:315px;width:220px;height:1px;background:#696969"></div>
<div class="a" style="left:949px;top:315px;width:1px;height:77px;background:#696969"></div>
<div class="a" style="left:930px;top:334px;width:20px;height:1px;background:#696969"></div>
<div class="a" style="left:950px;top:334px;width:200px;height:1px;background:repeating-linear-gradient(to right,#000 0 1px,#fff 1px 2px)"></div>
<div class="a" style="left:930px;top:353px;width:20px;height:1px;background:#696969"></div>
<div class="a" style="left:950px;top:353px;width:200px;height:1px;background:repeating-linear-gradient(to right,#000 0 1px,#fff 1px 2px)"></div>
<div class="a" style="left:930px;top:372px;width:20px;height:1px;background:#696969"></div>
<div class="a" style="left:950px;top:372px;width:200px;height:1px;background:repeating-linear-gradient(to right,#000 0 1px,#fff 1px 2px)"></div>
<div class="a" style="left:930px;top:391px;width:20px;height:1px;background:#696969"></div>
<div class="a" style="left:950px;top:391px;width:200px;height:1px;background:repeating-linear-gradient(to right,#000 0 1px,#fff 1px 2px)"></div>
<div class="a" style="left:1029px;top:316px;width:1px;height:76px;background:repeating-linear-gradient(to bottom,#000 0 1px,#fff 1px 2px)"></div>
<div class="a" style="left:1089px;top:316px;width:1px;height:76px;background:repeating-linear-gradient(to bottom,#000 0 1px,#fff 1px 2px)"></div>
<div class="a" style="left:1149px;top:316px;width:1px;height:76px;background:repeating-linear-gradient(to bottom,#000 0 1px,#fff 1px 2px)"></div>
<div class="a" style="left:950px;top:296px;width:79px;height:19px;overflow:hidden"><div class="t" style="left:23.70px;top:3px;font-size:11px;color:#000;transform-origin:0 50%;transform:scaleX(0.9333);">Positie</div></div>
<div class="a" style="left:1030px;top:296px;width:59px;height:19px;overflow:hidden"><div class="t" style="left:0.00px;top:3px;font-size:11px;color:#000;transform-origin:0 50%;transform:scaleX(0.9537);">Hoogte (mm)</div></div>
<div class="a" style="left:1090px;top:296px;width:59px;height:19px;overflow:hidden"><div class="t" style="left:3.90px;top:3px;font-size:11px;color:#000;transform-origin:0 50%;transform:scaleX(0.9603);">U (W/m2K)</div></div>
<div class="t" style="left:951.80px;top:318px;font-size:11px;color:#000;transform-origin:0 50%;transform:scaleX(0.9740);">Links</div>
<div class="t" style="left:1079.84px;top:318px;font-size:11px;color:#000;transform-origin:0 50%;transform:scaleX(1.0840);">0</div>
<div class="t" style="left:1139.84px;top:318px;font-size:11px;color:#000;transform-origin:0 50%;transform:scaleX(1.0840);">0</div>
<div class="t" style="left:951.80px;top:337px;font-size:11px;color:#000;transform-origin:0 50%;transform:scaleX(0.9850);">Boven</div>
<div class="t" style="left:1079.84px;top:337px;font-size:11px;color:#000;transform-origin:0 50%;transform:scaleX(1.0840);">0</div>
<div class="t" style="left:1139.84px;top:337px;font-size:11px;color:#000;transform-origin:0 50%;transform:scaleX(1.0840);">0</div>
<div class="t" style="left:951.80px;top:356px;font-size:11px;color:#000;transform-origin:0 50%;transform:scaleX(0.9856);">Rechts</div>
<div class="t" style="left:1079.84px;top:356px;font-size:11px;color:#000;transform-origin:0 50%;transform:scaleX(1.0840);">0</div>
<div class="t" style="left:1139.84px;top:356px;font-size:11px;color:#000;transform-origin:0 50%;transform:scaleX(1.0840);">0</div>
<div class="t" style="left:951.80px;top:375px;font-size:11px;color:#000;transform-origin:0 50%;transform:scaleX(0.9799);">Onder</div>
<div class="t" style="left:1073.97px;top:375px;font-size:11px;color:#000;transform-origin:0 50%;transform:scaleX(1.0274);">30</div>
<div class="t" style="left:1139.84px;top:375px;font-size:11px;color:#000;transform-origin:0 50%;transform:scaleX(1.0840);">6</div>
<div class="btn" style="left:12px;top:818px;width:90px"></div>
<div class="t" style="left:41.80px;top:822px;font-size:12px;color:#000;transform-origin:0 50%;transform:scaleX(0.9072);">Nieuw</div>
<div class="btn dis" style="left:112px;top:818px;width:73px"></div>
<div class="t" style="left:126.90px;top:822px;font-size:12px;color:#838383;transform-origin:0 50%;transform:scaleX(0.8812);">Kopiëren</div>
<div class="btn dis" style="left:196px;top:818px;width:73px"></div>
<div class="t" style="left:210.10px;top:822px;font-size:12px;color:#838383;transform-origin:0 50%;transform:scaleX(0.8947);">Verwijder</div>
<div class="btn" style="left:324px;top:818px;width:73px"></div>
<div class="t" style="left:328.00px;top:822px;font-size:12px;color:#000;transform-origin:0 50%;transform:scaleX(0.8897);">&lt;&lt; (F8) Terug</div>
<div class="btn dis" style="left:406px;top:818px;width:73px"></div>
<div class="t" style="left:407.40px;top:822px;font-size:12px;color:#838383;transform-origin:0 50%;transform:scaleX(0.8662);">Vooruit (F9) &gt;&gt;</div>
<div class="btn" style="left:1347px;top:818px;width:73px"></div>
<div class="t" style="left:1376.10px;top:822px;font-size:12px;color:#000;transform-origin:0 50%;transform:scaleX(0.8671);">OK</div>
<div class="btn" style="left:1429px;top:818px;width:73px"></div>
<div class="t" style="left:1440.10px;top:822px;font-size:12px;color:#000;transform-origin:0 50%;transform:scaleX(0.9013);">Annuleren</div>
<svg class="a" style="left:1500px;top:831px" width="14" height="14" viewBox="0 0 14 14"><path d="M2.4 14L14 2.4M6.4 14L14 6.4M10.4 14L14 10.4" stroke="#fff" stroke-width="1.3" fill="none"/><path d="M3.8 14L14 3.8M7.8 14L14 7.8M11.8 14L14 11.8" stroke="#a3a3a3" stroke-width="1.3" fill="none"/></svg>
</body></html>
